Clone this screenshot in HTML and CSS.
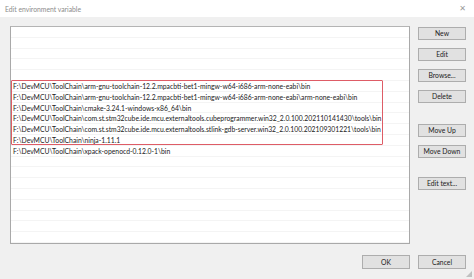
FILE: index.html
```html
<!DOCTYPE html>
<html>
<head>
<meta charset="utf-8">
<link rel="stylesheet" href="styles.css">
</head>
<body>
<div class="window">
  <div class="titlebar">
    <span class="title">Edit environment variable</span>
    <span class="close">✕</span>
  </div>
  <div class="content">
    <div class="list">
      <div class="rows">
        <div class="row empty"></div>
        <div class="row empty"></div>
        <div class="row empty"></div>
        <div class="row empty"></div>
        <div class="row empty"></div>
        <div class="row">F:\DevMCU\ToolChain\arm-gnu-toolchain-12.2.mpacbti-bet1-mingw-w64-i686-arm-none-eabi\bin</div>
        <div class="row">F:\DevMCU\ToolChain\arm-gnu-toolchain-12.2.mpacbti-bet1-mingw-w64-i686-arm-none-eabi\arm-none-eabi\bin</div>
        <div class="row">F:\DevMCU\ToolChain\cmake-3.24.1-windows-x86_64\bin</div>
        <div class="row">F:\DevMCU\ToolChain\com.st.stm32cube.ide.mcu.externaltools.cubeprogrammer.win32_2.0.100.202110141430\tools\bin</div>
        <div class="row">F:\DevMCU\ToolChain\com.st.stm32cube.ide.mcu.externaltools.stlink-gdb-server.win32_2.0.100.202109301221\tools\bin</div>
        <div class="row">F:\DevMCU\ToolChain\ninja-1.11.1</div>
        <div class="row">F:\DevMCU\ToolChain\xpack-openocd-0.12.0-1\bin</div>
        <div class="row empty"></div>
        <div class="row empty"></div>
        <div class="row empty"></div>
        <div class="row empty"></div>
        <div class="row empty"></div>
        <div class="row empty"></div>
        <div class="row empty"></div>
        <div class="row empty"></div>
        <div class="row empty"></div>
      </div>
      <div class="highlight"></div>
    </div>
    <div class="buttons">
      <button class="btn">New</button>
      <button class="btn g1">Edit</button>
      <button class="btn g1">Browse...</button>
      <button class="btn g1">Delete</button>
      <button class="btn g2">Move Up</button>
      <button class="btn g1">Move Down</button>
      <button class="btn g3">Edit text...</button>
    </div>
  </div>
  <div class="footer">
    <button class="btn">OK</button>
    <button class="btn">Cancel</button>
  </div>
  <div class="grip"></div>
</div>
</body>
</html>
```
FILE: styles.css
```css
html, body {
  margin: 0;
  padding: 0;
}
body {
  font-family: "Lato", "Open Sans", sans-serif;
  font-size: 6.8px;
  color: #1a1a1a;
}
.window {
  position: relative;
  width: 474px;
  height: 279px;
  background: #f0f0f0;
  overflow: hidden;
}
.titlebar {
  height: 17px;
  background: #ffffff;
  display: flex;
  align-items: center;
  justify-content: space-between;
  padding: 0 8px 0 5px;
}
.title {
  color: #8c8c8c;
  font-size: 6.8px;
}
.close {
  color: #9a9a9a;
  font-size: 8px;
  font-family: "DejaVu Sans", sans-serif;
}
.content {
  display: flex;
  padding: 9px 0 0 10px;
}
.list {
  position: relative;
  width: 398px;
  height: 216px;
  background: #ffffff;
  border: 1px solid #a9a9a9;
  border-top-color: #b4b4b4;
  overflow: hidden;
}
.rows {
  display: flex;
  flex-direction: column;
}
.row {
  height: 10.8px;
  line-height: 10.8px;
  padding-left: 2px;
  white-space: nowrap;
  box-sizing: border-box;
  border-bottom: 1px solid #f4f4f4;
  flex: none;
}
.highlight {
  position: absolute;
  left: 0;
  top: 53px;
  width: 372px;
  height: 65px;
  border: 1.5px solid #de5c66;
  border-radius: 1px;
  box-sizing: border-box;
}
.buttons {
  display: flex;
  flex-direction: column;
  margin-left: 8px;
  padding-top: 1px;
}
.btn {
  width: 48px;
  height: 13px;
  padding: 0;
  margin: 0;
  background: #e1e1e1;
  border: 1px solid #adadad;
  font-family: "Lato", "Open Sans", sans-serif;
  font-size: 6.8px;
  color: #1a1a1a;
  line-height: 11px;
  box-sizing: border-box;
}
.g1 { margin-top: 8px; }
.g2 { margin-top: 21px; }
.g3 { margin-top: 19px; }
.footer {
  display: flex;
  justify-content: flex-end;
  gap: 8px;
  padding: 11px 8px 0 0;
}
.footer .btn {
  height: 14px;
  width: 48px;
}
.grip {
  position: absolute;
  right: 2px;
  bottom: 2px;
  width: 6px;
  height: 6px;
  background:
    radial-gradient(circle, #bdbdbd 0.7px, transparent 0.8px) 0 0 / 2px 2px;
  clip-path: polygon(100% 0, 100% 100%, 0 100%);
}
```
